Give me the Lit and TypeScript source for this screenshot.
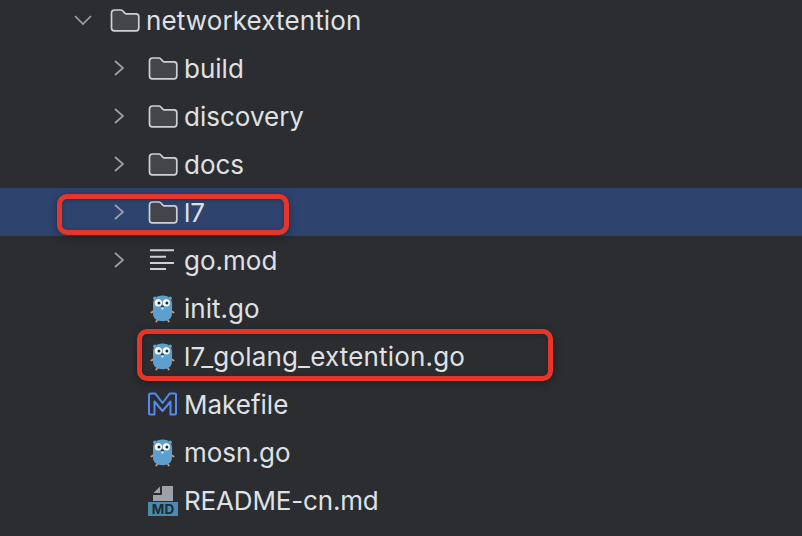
import { LitElement, html, css, svg } from "lit";
import { customElement } from "lit/decorators.js";

const folder = svg`<svg class="ic" viewBox="0 0 30 24" width="30" height="24"><path d="M1.500 5a3 3 0 0 1 3-3h6.200c.9 0 1.600.4 2.200 1l2.200 2.400c.3.3.7.5 1.100.5H26a2.800 2.800 0 0 1 2.800 2.800V20a2.800 2.800 0 0 1-2.800 2.800H4.300A2.800 2.800 0 0 1 1.500 20z" fill="#43454a" stroke="#ced0d6" stroke-width="1.700"/></svg>`;
const gopher = svg`<svg class="ic" viewBox="0 0 30 30" width="30" height="30">
  <circle cx="6.800" cy="5.200" r="1.700" fill="#5f9fcf"/><circle cx="22.200" cy="5.200" r="1.700" fill="#5f9fcf"/>
  <path d="M5 18.500l-1.700 1M24 18.500l1.700 1" stroke="#d9a27a" stroke-width="1.500" stroke-linecap="round"/>
  <path d="M9 27.500l-.8 1M20 27.500l.8 1" stroke="#d9a27a" stroke-width="1.700" stroke-linecap="round"/>
  <path d="M5 11c0-5.500 3.600-8.500 9.500-8.500S24 5.500 24 11v9.500c0 5-3.800 7.700-9.500 7.700S5 25.500 5 20.500z" fill="#5f9fcf"/>
  <circle cx="10.300" cy="9.800" r="3.600" fill="#fff"/><circle cx="18.300" cy="9.800" r="3.600" fill="#fff"/>
  <circle cx="11" cy="10" r="1.500" fill="#1d2730"/><circle cx="18.900" cy="10" r="1.500" fill="#1d2730"/>
  <ellipse cx="14.400" cy="13.600" rx="1.500" ry="1" fill="#2a2f36"/>
  <rect x="13.500" y="14.500" width="1.800" height="1.900" fill="#fff"/>
</svg>`;
const lines = svg`<svg class="ic" viewBox="0 0 30 24" width="30" height="24"><path d="M2 2.200h24M2 8.800h16M2 14.900h24M2 21h16" stroke="#ced0d6" stroke-width="2" fill="none"/></svg>`;
const make = svg`<svg class="ic" viewBox="0 0 30 24" width="30" height="24"><path d="M3 1.500h4.300L14.500 11l7.200-9.500H27c.6 0 1 .4 1 1V21.500c0 .6-.4 1-1 1h-4.500V9.500L14.500 19 6.500 9.500v13H2c-.6 0-1-.4-1-1V3.500c0-1.100.9-2 2-2z" fill="none" stroke="#548af7" stroke-width="2" stroke-linejoin="round"/></svg>`;
const sheet = svg`<svg class="sheet" viewBox="0 0 20 15" width="20" height="15"><path d="M9 0h11v15H0V9h8a1 1 0 0 0 1-1z" fill="#9ea1a8"/><path d="M7 0.500V7H0.500z" fill="#9ea1a8"/></svg>`;
const md = html`<span class="md">${sheet}<span class="tag">MD</span></span>`;
const right = svg`<svg class="chev" viewBox="0 0 12 18" width="12" height="18"><path d="M2 2l8 7-8 7" fill="none" stroke="#9da0a8" stroke-width="1.700"/></svg>`;
const down = svg`<svg class="chev" viewBox="0 0 18 12" width="18" height="12"><path d="M1 2l8 8 8-8" fill="none" stroke="#9da0a8" stroke-width="1.700"/></svg>`;

interface Row { name: string; icon: unknown; chev?: unknown; level: 1 | 2; sel?: boolean; track?: number }
const rows: Row[] = [
  { name: "networkextention", icon: folder, chev: down, level: 1, track: 0.125 },
  { name: "build", icon: folder, chev: right, level: 2 },
  { name: "discovery", icon: folder, chev: right, level: 2 },
  { name: "docs", icon: folder, chev: right, level: 2 },
  { name: "l7", icon: folder, chev: right, level: 2, sel: true },
  { name: "go.mod", icon: lines, chev: right, level: 2 },
  { name: "init.go", icon: gopher, level: 2 },
  { name: "l7_golang_extention.go", icon: gopher, level: 2, track: 0.18 },
  { name: "Makefile", icon: make, level: 2 },
  { name: "mosn.go", icon: gopher, level: 2 },
  { name: "README-cn.md", icon: md, level: 2, track: -0.16 },
];

@customElement("app-root")
export class AppRoot extends LitElement {
  static styles = css`
    :host { display: block; position: relative; width: 802px; height: 536px; overflow: hidden; background: #2b2d30; font-family: Inter, "Liberation Sans", sans-serif; }
    .tree { margin-top: -4px; }
    .row { height: 48px; display: flex; align-items: center; color: #dfe1e5; font-size: 26px; white-space: nowrap; }
    .row.sel { background: #2e436e; }
    .l1 { padding-left: 62px; }
    .l2 { padding-left: 100px; }
    .cv { width: 48px; box-sizing: border-box; display: flex; align-items: center; flex: none; }
    .l1 .cv { padding-left: 12px; }
    .l2 .cv { padding-left: 13px; }
    .iw { width: 36px; flex: none; display: flex; align-items: center; }
    .ic, .chev, .sheet { display: block; }
    .md { display: flex; flex-direction: column; align-items: center; gap: 1px; width: 30px; margin-top: 2px; }
    .sheet { margin-right: 1px; }
    .tag { width: 30px; height: 14px; background: #4a8cb0; color: #1f2a33; font-size: 13.500px; font-weight: 700; line-height: 14px; text-align: center; }
    .mark { position: absolute; box-sizing: border-box; border: 5px solid #e8352a; border-radius: 10px; box-shadow: 0 2px 8px rgba(0,0,0,.35), inset 0 1px 4px rgba(0,0,0,.25); }
    .m1 { left: 57px; top: 194px; width: 232px; height: 41px; }
    .m2 { left: 137px; top: 329px; width: 416px; height: 52px; }
  `;
  render() {
    return html`<div class="tree">
      ${rows.map(r => html`<div class="row l${r.level} ${r.sel ? "sel" : ""}">
        <span class="cv">${r.chev ?? ""}</span><span class="iw">${r.icon}</span><span style="letter-spacing:${r.track ?? 0}px">${r.name}</span>
      </div>`)}
    </div>
    <div class="mark m1"></div><div class="mark m2"></div>`;
  }
}
